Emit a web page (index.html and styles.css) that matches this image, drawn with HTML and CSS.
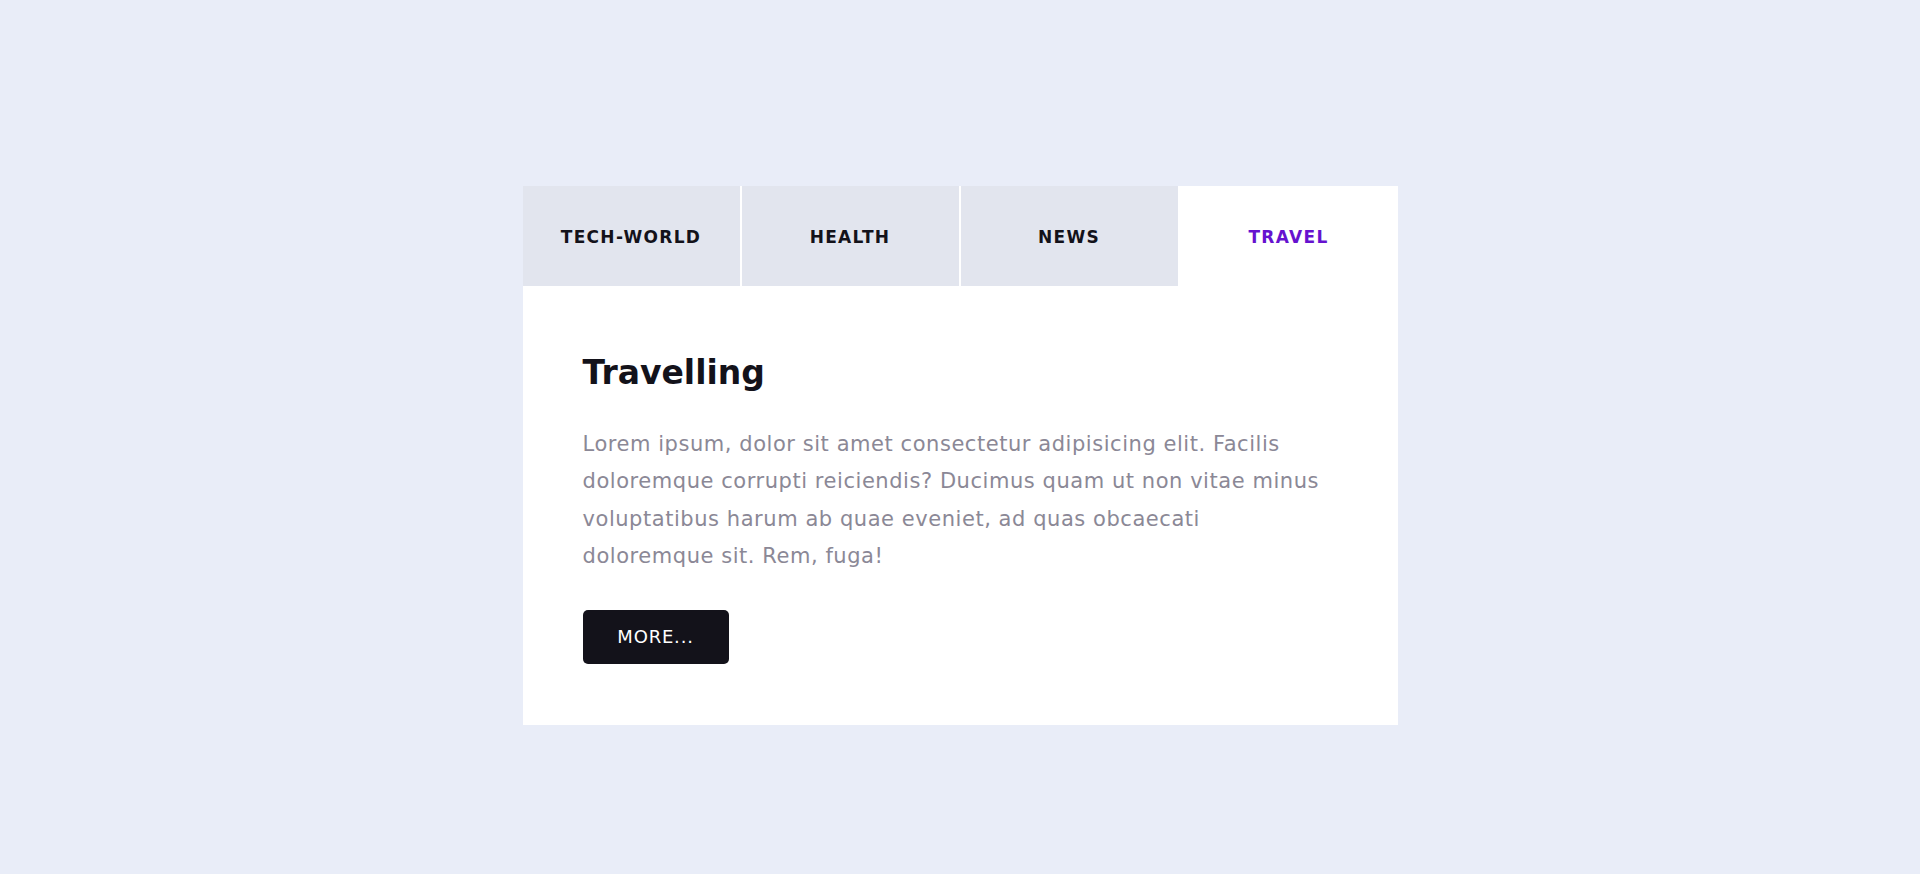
FILE: index.html
```html
<!DOCTYPE html>
<html lang="en">
<head>
<meta charset="utf-8">
<title>Tabs</title>
<link rel="stylesheet" href="styles.css">
</head>
<body>
<main class="page">
  <section class="card">
    <nav class="tabs">
      <div class="tab">TECH-WORLD</div>
      <div class="tab">HEALTH</div>
      <div class="tab">NEWS</div>
      <div class="tab tab-active">TRAVEL</div>
    </nav>
    <div class="content">
      <h2 class="title">Travelling</h2>
      <p class="text">Lorem ipsum, dolor sit amet consectetur adipisicing elit. Facilis doloremque corrupti reiciendis? Ducimus quam ut non vitae minus voluptatibus harum ab quae eveniet, ad quas obcaecati doloremque sit. Rem, fuga!</p>
      <button class="more">MORE...</button>
    </div>
  </section>
</main>
</body>
</html>
```
FILE: styles.css
```css
* { box-sizing: border-box; }
html, body { margin: 0; padding: 0; }
body {
  background: #e9edf8;
  font-family: "DejaVu Sans", "Liberation Sans", sans-serif;
  color: #13121a;
  min-height: 874px;
}
.page {
  display: flex;
  justify-content: center;
  padding-top: 186px;
}
.card {
  width: 875px;
  background: #ffffff;
}
.tabs {
  display: grid;
  grid-template-columns: 217px 219px 219px 1fr;
  height: 100px;
}
.tab {
  display: flex;
  align-items: center;
  justify-content: center;
  padding-top: 1px;
  background: #e2e5ee;
  font-weight: 700;
  font-size: 17px;
  letter-spacing: 1.3px;
  color: #13121a;
}
.tab + .tab { border-left: 2px solid #ffffff; }
.tab-active {
  background: #ffffff;
  color: #6612cf;
  border-left: none;
}
.content {
  padding: 67px 60px 61px;
}
.title {
  margin: 0;
  font-size: 33px;
  font-weight: 700;
  line-height: 1.2;
  color: #13121a;
}
.text {
  margin: 33px 0 34px;
  font-size: 21px;
  letter-spacing: 0.55px;
  line-height: 37.6px;
  color: #8b8896;
}
.more {
  display: block;
  width: 146px;
  height: 54px;
  border: none;
  border-radius: 5px;
  background: #13121a;
  color: #ffffff;
  font-family: "DejaVu Sans", "Liberation Sans", sans-serif;
  font-size: 18px;
  letter-spacing: 0.8px;
}
```
